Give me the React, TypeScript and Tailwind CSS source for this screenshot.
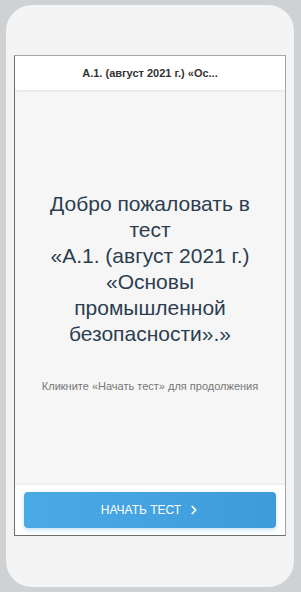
import { ChevronRight } from "lucide-react";

export default function App() {
  return (
    <div className="h-[592px] w-[301px] bg-[#cfd2d4] pt-[5px] pl-[6px] font-['Liberation_Sans',Arial,sans-serif]">
      <div className="flex h-[582px] w-[288px] flex-col rounded-[26px] bg-[#f4f4f4] pt-[50px] pl-[8px]">
        <div className="flex h-[481px] w-[272px] flex-col border border-[#a8a8a8] border-b-[#6f6f6f] border-l-[#6f6f6f] bg-[#f6f6f6]">
          <header className="flex h-[34px] shrink-0 items-center justify-center bg-white shadow-[0_1px_2px_rgba(0,0,0,0.08)]">
            <span className="text-[11px] font-bold text-[#333]">А.1. (август 2021 г.) «Ос...</span>
          </header>

          <main className="flex flex-1 flex-col items-center justify-center px-[28px] pt-[10px] text-center">
            <h1 className="text-[21px] leading-[26px] text-[#2c3e50]">
              Добро пожаловать в тест
              <br />
              «А.1. (август 2021 г.) «Основы промышленной безопасности».»
            </h1>
            <p className="mt-[31px] whitespace-nowrap text-[11px] text-[#777]">Кликните «Начать тест» для продолжения</p>
          </main>

          <footer className="shrink-0 bg-white px-[9px] py-[7px] shadow-[0_-1px_2px_rgba(0,0,0,0.06)]">
            <button className="flex h-[36px] w-full items-center justify-center gap-[6px] rounded-[4px] bg-gradient-to-r from-[#4aaae6] to-[#3d9bd9] pl-[2px] text-[12px] font-medium text-white shadow-[0_2px_4px_rgba(61,155,217,0.3)]">
              НАЧАТЬ ТЕСТ
              <ChevronRight size={14} strokeWidth={3} />
            </button>
          </footer>
        </div>
      </div>
    </div>
  );
}
